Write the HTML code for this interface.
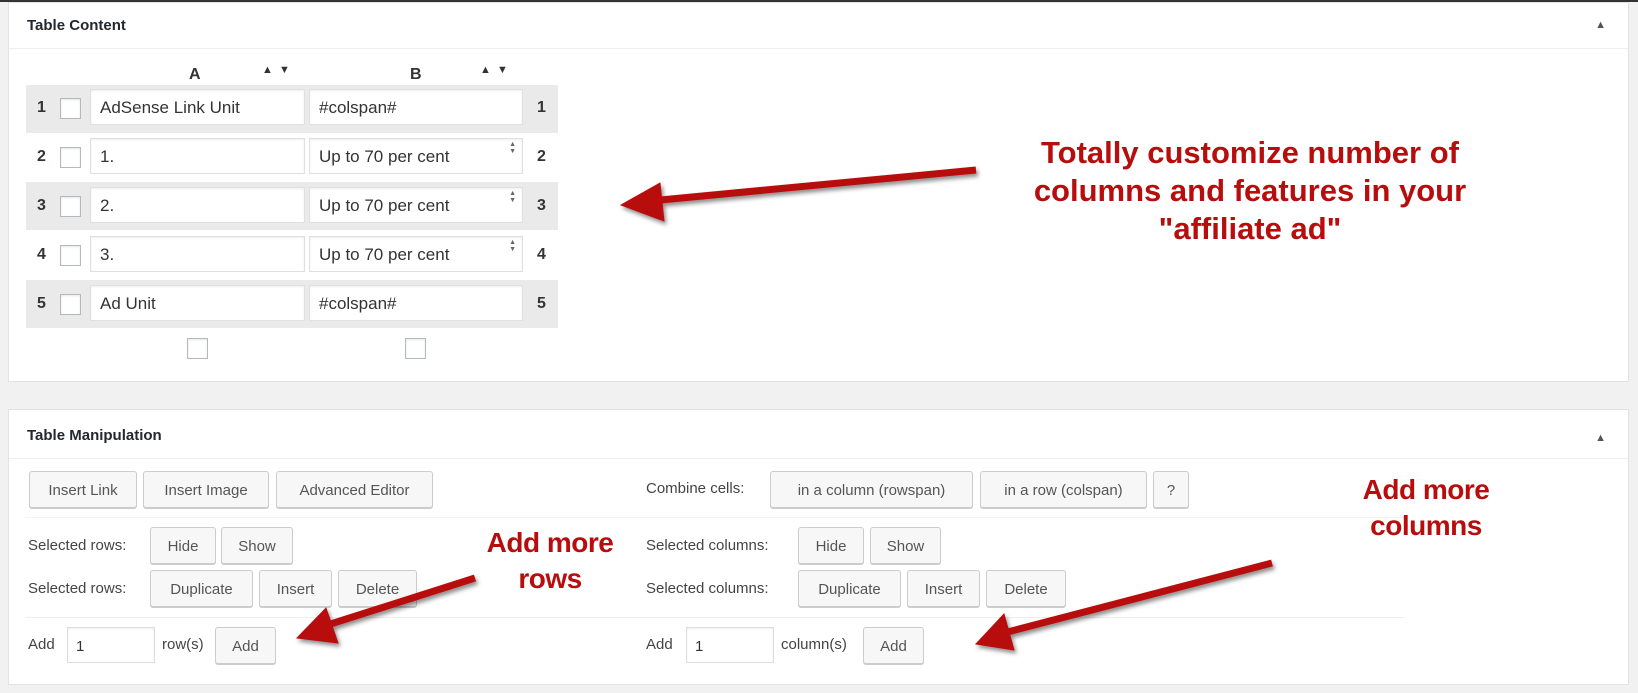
<!DOCTYPE html>
<html><head><meta charset="utf-8"><style>
*{box-sizing:border-box;margin:0;padding:0}
body{width:1638px;height:693px;background:#f1f1f1;position:relative;overflow:hidden;font-family:"Liberation Sans",sans-serif;color:#444;font-size:15px}
.abs{position:absolute}
.panel{position:absolute;background:#fff;border:1px solid #e2e2e2}
.title{position:absolute;left:18px;font-weight:bold;font-size:15px;color:#23282d}
.sep{position:absolute;height:1px;background:#eee}
.band{position:absolute;left:26px;width:532px;height:48px;background:#eaeaea}
.num{position:absolute;font-weight:bold;font-size:16px;color:#333}
.cb{position:absolute;width:21px;height:21px;border:1px solid #b4b9be;background:#fff;box-shadow:inset 0 1px 2px rgba(0,0,0,.1)}
.ta{position:absolute;height:36px;border:1px solid #e0e0e0;background:#fff;box-shadow:inset 0 1px 2px rgba(0,0,0,.07);font-size:17px;color:#333;padding:8px 9px}
.sp{position:absolute;right:6px;top:2px;font-size:7px;line-height:7px;color:#666}
.btn{position:absolute;height:37px;border:1px solid #ccc;background:#f7f7f7;border-radius:3px;box-shadow:0 1px 0 #ccc;font-size:15px;color:#555;text-align:center;line-height:37px}
.lbl{position:absolute;font-size:15px;color:#444}
.inp{position:absolute;height:36px;border:1px solid #ddd;background:#fff;font-size:15px;color:#333;padding:10px 8px;box-shadow:inset 0 1px 2px rgba(0,0,0,.07)}
.red{position:absolute;color:#b80d0d;font-weight:bold;font-size:28px;text-align:center;line-height:36px;letter-spacing:-0.5px}
.tri{position:absolute;font-size:11px;color:#555}
</style></head><body>
<div class="abs" style="left:0;top:0;width:1638px;height:2px;background:#333"></div>
<div class="panel" style="left:8px;top:2px;width:1621px;height:380px">
 <div class="title" style="top:14px">Table Content</div>
 <div class="sep" style="left:0;top:45px;width:1619px"></div>
 <div class="tri" style="right:22px;top:16px">▲</div>
</div>
<div class="abs" style="left:189px;top:66px;font-weight:bold;font-size:16px;color:#333">A</div>
<div class="abs" style="left:262px;top:64px;font-size:11px;color:#333">▲ &nbsp;▼</div>
<div class="abs" style="left:410px;top:66px;font-weight:bold;font-size:16px;color:#333">B</div>
<div class="abs" style="left:480px;top:64px;font-size:11px;color:#333">▲ &nbsp;▼</div>

<div class="band" style="top:85px"></div>
<div class="band" style="top:182px"></div>
<div class="band" style="top:280px"></div>

<div class="num" style="left:37px;top:99px">1</div><div class="cb" style="left:60px;top:98px"></div>
<div class="ta" style="left:90px;top:89px;width:215px">AdSense Link Unit</div>
<div class="ta" style="left:309px;top:89px;width:214px">#colspan#</div>
<div class="num" style="left:537px;top:99px">1</div>

<div class="num" style="left:37px;top:148px">2</div><div class="cb" style="left:60px;top:147px"></div>
<div class="ta" style="left:90px;top:138px;width:215px">1.</div>
<div class="ta" style="left:309px;top:138px;width:214px">Up to 70 per cent<div class="sp">▲<br>▼</div></div>
<div class="num" style="left:537px;top:148px">2</div>

<div class="num" style="left:37px;top:197px">3</div><div class="cb" style="left:60px;top:196px"></div>
<div class="ta" style="left:90px;top:187px;width:215px">2.</div>
<div class="ta" style="left:309px;top:187px;width:214px">Up to 70 per cent<div class="sp">▲<br>▼</div></div>
<div class="num" style="left:537px;top:197px">3</div>

<div class="num" style="left:37px;top:246px">4</div><div class="cb" style="left:60px;top:245px"></div>
<div class="ta" style="left:90px;top:236px;width:215px">3.</div>
<div class="ta" style="left:309px;top:236px;width:214px">Up to 70 per cent<div class="sp">▲<br>▼</div></div>
<div class="num" style="left:537px;top:246px">4</div>

<div class="num" style="left:37px;top:295px">5</div><div class="cb" style="left:60px;top:294px"></div>
<div class="ta" style="left:90px;top:285px;width:215px">Ad Unit</div>
<div class="ta" style="left:309px;top:285px;width:214px">#colspan#</div>
<div class="num" style="left:537px;top:295px">5</div>

<div class="cb" style="left:187px;top:338px"></div>
<div class="cb" style="left:405px;top:338px"></div>

<div class="red" style="left:960px;top:134px;width:580px;font-size:31px;line-height:38px;letter-spacing:0">Totally customize number of<br>columns and features in your<br>"affiliate ad"</div>

<div class="panel" style="left:8px;top:409px;width:1621px;height:276px">
 <div class="title" style="top:17px">Table Manipulation</div>
 <div class="sep" style="left:0;top:48px;width:1619px"></div>
 <div class="tri" style="right:22px;top:22px">▲</div>
 <div class="sep" style="left:16px;top:107px;width:1380px;background:#f3f3f3"></div>
 <div class="sep" style="left:16px;top:207px;width:1380px;background:#eee"></div>
</div>
<div class="btn" style="left:29px;top:471px;width:108px">Insert Link</div>
<div class="btn" style="left:143px;top:471px;width:126px">Insert Image</div>
<div class="btn" style="left:276px;top:471px;width:157px">Advanced Editor</div>
<div class="lbl" style="left:646px;top:480px">Combine cells:</div>
<div class="btn" style="left:770px;top:471px;width:203px">in a column (rowspan)</div>
<div class="btn" style="left:980px;top:471px;width:167px">in a row (colspan)</div>
<div class="btn" style="left:1153px;top:471px;width:36px">?</div>

<div class="lbl" style="left:28px;top:537px">Selected rows:</div>
<div class="btn" style="left:150px;top:527px;width:66px">Hide</div>
<div class="btn" style="left:221px;top:527px;width:72px">Show</div>
<div class="lbl" style="left:28px;top:580px">Selected rows:</div>
<div class="btn" style="left:150px;top:570px;width:103px">Duplicate</div>
<div class="btn" style="left:259px;top:570px;width:73px">Insert</div>
<div class="btn" style="left:338px;top:570px;width:79px">Delete</div>

<div class="lbl" style="left:646px;top:537px">Selected columns:</div>
<div class="btn" style="left:798px;top:527px;width:66px">Hide</div>
<div class="btn" style="left:870px;top:527px;width:71px">Show</div>
<div class="lbl" style="left:646px;top:580px">Selected columns:</div>
<div class="btn" style="left:798px;top:570px;width:103px">Duplicate</div>
<div class="btn" style="left:907px;top:570px;width:73px">Insert</div>
<div class="btn" style="left:986px;top:570px;width:80px">Delete</div>

<div class="lbl" style="left:28px;top:636px">Add</div>
<div class="inp" style="left:67px;top:627px;width:88px">1</div>
<div class="lbl" style="left:162px;top:636px">row(s)</div>
<div class="btn" style="left:215px;top:627px;width:61px">Add</div>
<div class="lbl" style="left:646px;top:636px">Add</div>
<div class="inp" style="left:686px;top:627px;width:88px">1</div>
<div class="lbl" style="left:781px;top:636px">column(s)</div>
<div class="btn" style="left:863px;top:627px;width:61px">Add</div>

<div class="red" style="left:450px;top:525px;width:200px">Add more<br>rows</div>
<div class="red" style="left:1326px;top:472px;width:200px">Add more<br>columns</div>

<svg class="abs" style="left:0;top:0" width="1638" height="693">
<defs><filter id="s" x="-20%" y="-20%" width="140%" height="140%"><feDropShadow dx="2" dy="3" stdDeviation="2" flood-opacity=".45"/></filter></defs>
<g fill="#b80d0d" stroke="#b80d0d" filter="url(#s)">
<line x1="976" y1="170" x2="650" y2="201" stroke-width="7"/>
<polygon points="621,205 660,183 664,221" stroke-width="1"/>
<line x1="475" y1="578" x2="318" y2="628" stroke-width="7"/>
<polygon points="297,638 326,608 338,643" stroke-width="1"/>
<line x1="1272" y1="563" x2="1000" y2="634" stroke-width="7"/>
<polygon points="976,644 1004,614 1014,650" stroke-width="1"/>
</g>
</svg>
</body></html>
